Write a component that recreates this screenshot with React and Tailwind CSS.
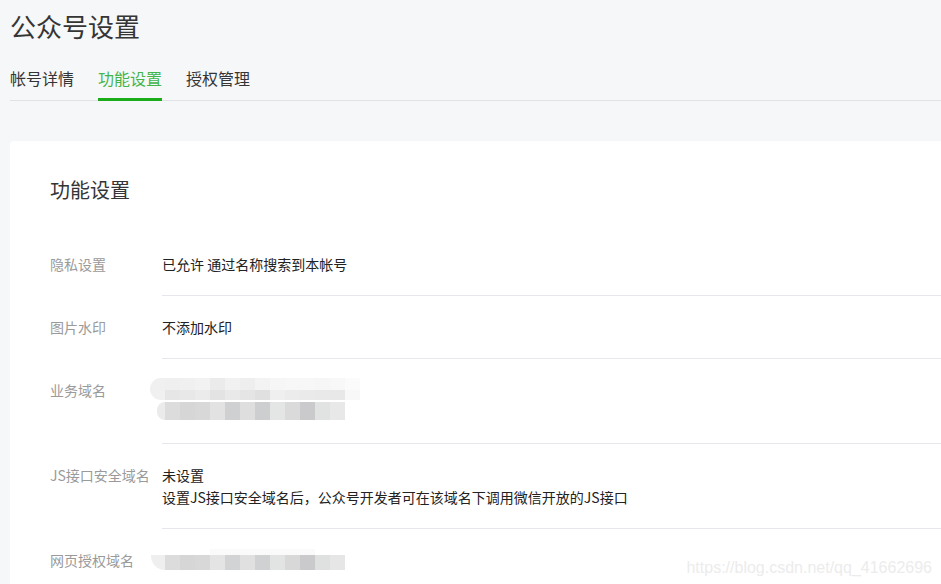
const blurTop = ["bg-[#efefef]", "bg-[#f0f0f0]", "bg-[#f2f2f2]", "bg-[#ebebeb]", "bg-[#f1f1f1]", "bg-[#eeeeee]", "bg-[#f3f3f3]", "bg-[#f6f6f6]", "bg-[#f7f7f7]", "bg-[#f7f7f7]", "bg-[#f6f6f6]", "bg-[#f8f8f8]", "bg-[#fbfbfb]"];
const blurMid = ["bg-[#e6e6e6]", "bg-[#e8e8e8]", "bg-[#ebebeb]", "bg-[#e3e3e3]", "bg-[#e9e9e9]", "bg-[#e5e5e5]", "bg-[#e0e0e0]", "bg-[#efefef]", "bg-[#ececec]", "bg-[#eaeaea]", "bg-[#e9e9e9]", "bg-[#e8e8e8]", "bg-[#f8f8f8]"];
const blurLow = ["bg-[#dcdcdc]", "bg-[#d6d6d6]", "bg-[#d8d8d8]", "bg-[#e2e2e2]", "bg-[#cfd0d2]", "bg-[#dedede]", "bg-[#cdcecf]", "bg-[#e4e5e5]", "bg-[#dadada]", "bg-[#cac9cb]", "bg-[#e1e2e2]", "bg-[#e8e8e8]"];
const blurLast = ["bg-[#dcdcdc]", "bg-[#d6d6d6]", "bg-[#d8d8d8]", "bg-[#e4e4e4]", "bg-[#d2d3d5]", "bg-[#e0e0e0]", "bg-[#d0d1d2]", "bg-[#e2e3e3]", "bg-[#d8d8d8]", "bg-[#cac9cb]", "bg-[#dfe0e0]", "bg-[#e6e6e6]"];

function Row({ label, children }) {
  return (
    <div className="flex">
      <div className="w-[112px] shrink-0 pt-5 text-[14px] leading-[22px] text-[#9a9a9a]">{label}</div>
      <div className="flex-1 py-5 border-b border-[#e7e7eb] text-[14px] leading-[22px] text-[#222]">
        {children}
      </div>
    </div>
  );
}

function BusinessDomainBlur() {
  return (
    <div className="flex flex-col h-[45px] -mt-px">
      <div className="flex -ml-[12px] h-[24px]">
        <div className="w-[15px] h-[22px] rounded-l-full bg-[#f0f0f0]" />
        {blurTop.map((c, i) => (
          <div key={i} className="w-[15px] flex flex-col">
            <div className={`h-[12px] ${c}`} />
            <div className={`h-[10px] ${blurMid[i]}`} />
          </div>
        ))}
      </div>
      <div className="flex -ml-[5px] h-[18px]">
        <div className="w-[8px] rounded-l-full bg-[#ebebeb]" />
        {blurLow.map((c, i) => (
          <div key={i} className={`w-[15px] ${c}`} />
        ))}
      </div>
    </div>
  );
}

function OAuthDomainBlur() {
  return (
    <div className="flex flex-col h-[22px]">
      <div className="flex h-[6px] ml-[48px]">
        <div className="w-[105px] bg-[#fafafa]" />
      </div>
      <div className="flex -ml-[11px] h-[15px]">
        <div className="w-[14px] rounded-bl-full rounded-tl-md bg-[#efefef]" />
        {blurLast.map((c, i) => (
          <div key={i} className={`w-[15px] ${c}`} />
        ))}
      </div>
    </div>
  );
}

export default function App() {
  return (
    <div className="relative h-[584px] w-[941px] overflow-hidden bg-[#f6f7f9] font-['Noto_Sans_CJK_SC','Noto_Sans',sans-serif] text-[#353535]">
      <div className="pl-[10px] pt-2">
        <h1 className="text-[26px] leading-[36px] font-normal text-[#353535]">公众号设置</h1>
      </div>

      <div className="ml-[10px] mt-3 flex gap-6 border-b border-[#e0e3e6] text-[16px] leading-[24px]">
        <div className="pt-[10px] pb-[8px] -mb-px border-b-[3px] border-transparent text-[#353535]">帐号详情</div>
        <div className="pt-[10px] pb-[8px] -mb-px border-b-[3px] border-[#1aad19] text-[#44b549]">功能设置</div>
        <div className="pt-[10px] pb-[8px] -mb-px border-b-[3px] border-transparent text-[#353535]">授权管理</div>
      </div>

      <div className="ml-[10px] mt-10 -mr-6 bg-white rounded-tl-[4px] pl-10 pt-[35px] pb-10">
        <h2 className="text-[20px] leading-[28px] font-normal text-[#353535]">功能设置</h2>

        <div className="mt-[29px]">
          <Row label="隐私设置">已允许 通过名称搜索到本帐号</Row>
          <Row label="图片水印">不添加水印</Row>
          <Row label="业务域名">
            <BusinessDomainBlur />
          </Row>
          <Row label="JS接口安全域名">
            <p>未设置</p>
            <p>设置JS接口安全域名后，公众号开发者可在该域名下调用微信开放的JS接口</p>
          </Row>
          <Row label="网页授权域名">
            <OAuthDomainBlur />
          </Row>
        </div>
      </div>

      <div className="absolute right-[9px] bottom-[6px] font-['Liberation_Sans',sans-serif] text-[16px] leading-[20px] text-[#ececec]">
        https://blog.csdn.net/qq_41662696
      </div>
    </div>
  );
}
